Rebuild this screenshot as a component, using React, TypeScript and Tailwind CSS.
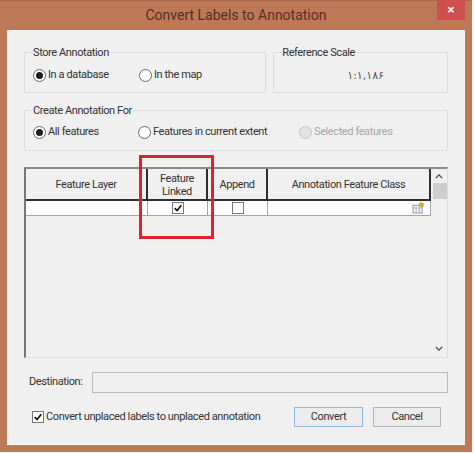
const font = { fontFamily: 'Roboto, "Liberation Sans", Arial, sans-serif' };

function Radio({ on, disabled, label, className = "" }: { on?: boolean; disabled?: boolean; label: string; className?: string }) {
  return (
    <div className={`flex items-center gap-[2px] ${className}`}>
      <span className={`flex h-[13px] w-[13px] items-center justify-center rounded-full border ${disabled ? "border-[#c4c4c4] bg-[#e2e2e2]" : "border-[#6a6a6a] bg-white"}`}>
        {on && <span className="h-[7px] w-[7px] rounded-full bg-[#1d1d1d]" />}
      </span>
      <span className={`text-[11px] leading-[14px] tracking-[-0.4px] ${disabled ? "text-[#a5a5a5]" : "text-[#333]"}`}>{label}</span>
    </div>
  );
}

function Group({ title, className, children }: { title: string; className: string; children: React.ReactNode }) {
  return (
    <div className={`relative rounded-[1px] border border-[#dcdcdc] ${className}`}>
      <span className="absolute left-[7px] top-[-7px] bg-[#f0f0f0] px-[1px] text-[11px] leading-[14px] tracking-[-0.4px] text-[#333]">{title}</span>
      {children}
    </div>
  );
}

function Check({ on, className = "" }: { on?: boolean; className?: string }) {
  return (
    <span className={`flex h-[12px] w-[12px] items-center justify-center border border-[#777] bg-white ${className}`}>
      {on && (
        <svg viewBox="0 0 12 12" className="h-[10px] w-[10px]">
          <path d="M2 6.2 L4.8 9 L10 2.8" fill="none" stroke="#111" strokeWidth="2" />
        </svg>
      )}
    </span>
  );
}

function Head({ className, children }: { className: string; children: React.ReactNode }) {
  return (
    <div className={`flex h-[32px] items-center justify-center border-b-2 border-r-2 border-b-[#2e2e2e] border-r-[#2e2e2e] pt-[1px] text-center text-[11px] leading-[13px] tracking-[-0.4px] text-[#333] ${className}`}>
      {children}
    </div>
  );
}

function Cell({ className, children }: { className: string; children?: React.ReactNode }) {
  return <div className={`flex h-[14px] items-center justify-center border-r border-[#a5a5a5] ${className}`}>{children}</div>;
}

export default function App() {
  return (
    <div style={font} className="relative h-[453px] w-[474px] overflow-hidden bg-[#f2f2f2]">
      <div className="flex h-[452px] w-[472px] flex-col border-t border-t-[#a56a4c] bg-[#bb7957] px-[7px] pb-[7px]">
        <div className="flex h-[29px] shrink-0 items-center justify-center text-[14px] text-[#5b2c1f]">
          Convert Labels to Annotation
        </div>
        <div className="flex min-h-0 flex-1 flex-col border-b border-b-white bg-[#f0f0f0] px-[17px]">
          <div className="mt-[22px] flex gap-[7px]">
            <Group title="Store Annotation" className="h-[41px] w-[244px]">
              <div className="flex pl-[8px] pt-[15px]">
                <Radio on label="In a database" className="w-[106px]" />
                <Radio label="In the map" />
              </div>
            </Group>
            <Group title="Reference Scale" className="h-[41px] w-[176px]">
              <div className="pl-[73px] pt-[16px] text-[11px] leading-[14px] text-[#555]" style={{ fontFamily: '"DejaVu Sans", sans-serif' }}>
                ۱:۱,۱۸۶
              </div>
            </Group>
          </div>
          <Group title="Create Annotation For" className="mt-[17px] h-[41px] w-[424px]">
            <div className="flex pl-[8px] pt-[14px]">
              <Radio on label="All features" className="w-[105px]" />
              <Radio label="Features in current extent" className="w-[161px]" />
              <Radio disabled label="Selected features" />
            </div>
          </Group>
          <div className="mt-[16px] flex h-[191px] w-[424px] border-l-2 border-t-2 border-l-[#777] border-t-[#8a8a8a] border-r border-b border-r-[#dedede] border-b-[#dedede]">
            <div className="w-[405px]">
              <div className="flex">
                <Head className="w-[122px]">Feature Layer</Head>
                <Head className="w-[60px]">Feature<br />Linked</Head>
                <Head className="w-[60px]">Append</Head>
                <Head className="w-[163px]">Annotation Feature Class</Head>
              </div>
              <div className="flex border-b border-[#a5a5a5] bg-white">
                <Cell className="w-[122px]" />
                <Cell className="w-[60px]"><Check on /></Cell>
                <Cell className="w-[60px]"><Check /></Cell>
                <div className="flex h-[14px] w-[163px] items-center justify-end border-r border-[#a5a5a5] pr-[5px]">
                  <svg viewBox="0 0 14 13" className="h-[12px] w-[13px]">
                    <rect x="1" y="3.5" width="10" height="8.5" fill="#eef2f6" stroke="#8b97a5" />
                    <path d="M1 6.5 H11 M4.5 6.5 V12 M8 6.5 V12" stroke="#a9b3bf" fill="none" />
                    <circle cx="10" cy="3" r="2.8" fill="#d2a93c" />
                  </svg>
                </div>
              </div>
            </div>
            <div className="flex flex-1 flex-col items-center justify-between pb-[6px]">
              <div className="flex w-full flex-col items-center">
                <svg viewBox="0 0 10 6" className="mt-[5px] h-[5px] w-[8px]">
                  <path d="M1 5 L5 1 L9 5" fill="none" stroke="#444" strokeWidth="1.6" />
                </svg>
                <div className="ml-[1px] mt-[4px] h-[16px] w-[14px] bg-[#cdcdcd]" />
              </div>
              <svg viewBox="0 0 10 6" className="h-[5px] w-[8px]">
                <path d="M1 1 L5 5 L9 1" fill="none" stroke="#444" strokeWidth="1.6" />
              </svg>
            </div>
          </div>
          <div className="mt-[14px] flex items-center">
            <span className="w-[68px] pl-[5px] text-[11px] tracking-[-0.4px] text-[#333]">Destination:</span>
            <div className="h-[21px] w-[356px] border border-[#b9b9b9] bg-[#efefef]" />
          </div>
          <div className="mt-[14px] flex items-center">
            <Check on className="ml-[8px] border-[#555]" />
            <span className="ml-[2px] w-[248px] text-[11px] tracking-[-0.4px] text-[#333]">Convert unplaced labels to unplaced annotation</span>
            <div className="flex h-[20px] w-[69px] items-center justify-center border border-[#8db7dc] bg-[#ececec] text-[11px] tracking-[-0.4px] text-[#333]">Convert</div>
            <div className="ml-[10px] flex h-[20px] w-[68px] items-center justify-center border border-[#b5b5b5] bg-[#ececec] text-[11px] tracking-[-0.4px] text-[#333]">Cancel</div>
          </div>
        </div>
      </div>
      <div className="absolute left-[437px] top-0 flex h-[20px] w-[28px] items-center justify-center bg-[#cf4f4f] text-[13px] font-bold text-white">×</div>
      <div className="absolute left-[139px] top-[155px] h-[84px] w-[75px] border-[3px] border-[#e2202f]" />
    </div>
  );
}
